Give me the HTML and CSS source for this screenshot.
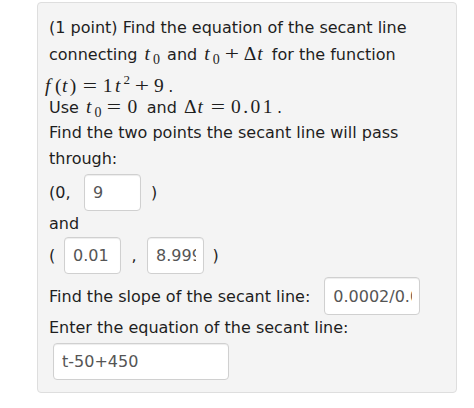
FILE: index.html
```html
<!DOCTYPE html>
<html>
<head>
<meta charset="utf-8">
<link rel="stylesheet" href="styles.css">
</head>
<body>
<div class="panel">
  <div class="line">(1 point) Find the equation of the secant line</div>
  <div class="line">connecting <span class="m"><i>t</i><span class="sub">0</span></span> and <span class="m"><i>t</i><span class="sub">0</span><span class="op plus">+</span><span class="delta">Δ</span><i>t</i></span> for the function</div>
  <div class="line lead"><span class="m"><i class="f">f</i><span class="p">(</span><i>t</i><span class="p">)</span><span class="op">=</span><span class="n">1</span><i>t</i><span class="sup">2</span><span class="op plus">+</span><span class="n">9</span></span>.</div>
  <div class="line">Use <span class="m"><i>t</i><span class="sub">0</span><span class="op">=</span><span class="n">0</span></span> and <span class="m"><span class="delta">Δ</span><i>t</i><span class="op">=</span><span class="n">0.01</span></span>.</div>
  <div class="line">Find the two points the secant line will pass</div>
  <div class="line">through:</div>
  <div class="row r1"><span>(0,</span><input class="field f1" value="9"><span class="close">)</span></div>
  <div class="line">and</div>
  <div class="row r2"><span>(</span><input class="field f2" value="0.01"><span class="comma">,</span><input class="field" value="8.999"><span class="close2">)</span></div>
  <div class="row r3"><span>Find the slope of the secant line:</span><input class="field wide" value="0.0002/0.01"></div>
  <div class="line">Enter the equation of the secant line:</div>
  <div class="row r4"><input class="field long" value="t-50+450"></div>
</div>
</body>
</html>
```

FILE: styles.css
```css
body {
  margin: 0;
  background: #ffffff;
  font-family: "DejaVu Sans", sans-serif;
  font-size: 16px;
  color: #1e1e1e;
}

.panel {
  box-sizing: border-box;
  width: 420px;
  margin: 2px 0 0 37px;
  padding: 11.5px 11px 12px 11px;
  background: #f4f4f4;
  border: 1px solid #dedede;
  border-radius: 4px;
}

.line {
  height: 26.4px;
  line-height: 26.4px;
  white-space: nowrap;
}

.row {
  display: flex;
  align-items: center;
  white-space: nowrap;
}

.r1 { margin-top: 1px; }
.r2 { margin-top: 0; }
.r3 { margin-top: 3px; height: 38px; }
.r4 { margin-top: 1.6px; }

.field {
  box-sizing: border-box;
  height: 37px;
  width: 57px;
  padding: 0 7px 0 8px;
  border: 1px solid #d0d0d0;
  border-radius: 4px;
  background: #ffffff;
  font-family: "DejaVu Sans", sans-serif;
  font-size: 16px;
  color: #555555;
  box-shadow: inset 0 1px 1px rgba(0, 0, 0, 0.075);
  outline: none;
}

.f1 { margin-left: 13.5px; }
.close { margin-left: 10px; }
.f2 { margin-left: 8.8px; }
.comma { margin: 0 10.4px 0 10.5px; }
.close2 { margin-left: 8.5px; }

.wide {
  width: 96px;
  height: 38px;
  margin-left: 14px;
}

.long {
  width: 176px;
  margin-left: 4px;
}

.m {
  font-family: "Liberation Serif", serif;
  font-size: 19.5px;
  margin: 0 2px;
}

.lead .m {
  margin-left: -3px;
}

.m i {
  font-style: italic;
  margin-right: 2px;
}

.m i.f {
  margin-left: -1px;
  margin-right: 4px;
}

.p {
  margin: 0 0.5px;
}

.n {
  letter-spacing: 2.5px;
}

.delta {
  margin-right: 1px;
}

.sub {
  font-size: 14px;
  margin-left: 1px;
  vertical-align: -4px;
}

.sup {
  font-size: 13px;
  margin-left: 1px;
  vertical-align: 8px;
}

.op {
  display: inline-block;
  width: 26px;
  text-align: center;
  transform: scaleX(1.3);
}

.op.plus {
  width: 24px;
}
```
